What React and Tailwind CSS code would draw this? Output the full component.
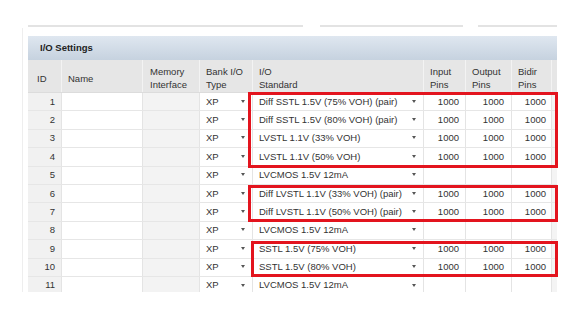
import React from 'react';

// I/O standard per pin row; pins blank for single-ended LVCMOS rows
const rows = [
  { id: 1, std: 'Diff SSTL 1.5V (75% VOH) (pair)', pins: true },
  { id: 2, std: 'Diff SSTL 1.5V (80% VOH) (pair)', pins: true },
  { id: 3, std: 'LVSTL 1.1V (33% VOH)', pins: true },
  { id: 4, std: 'LVSTL 1.1V (50% VOH)', pins: true },
  { id: 5, std: 'LVCMOS 1.5V 12mA', pins: false },
  { id: 6, std: 'Diff LVSTL 1.1V (33% VOH) (pair)', pins: true },
  { id: 7, std: 'Diff LVSTL 1.1V (50% VOH) (pair)', pins: true },
  { id: 8, std: 'LVCMOS 1.5V 12mA', pins: false },
  { id: 9, std: 'SSTL 1.5V (75% VOH)', pins: true },
  { id: 10, std: 'SSTL 1.5V (80% VOH)', pins: true },
  { id: 11, std: 'LVCMOS 1.5V 12mA', pins: false },
];

function Caret() {
  return (
    <span className="mb-[1px] h-0 w-0 border-x-[2.5px] border-t-[3px] border-x-transparent border-t-[#555]" />
  );
}

function HeadCell({ className, children }) {
  return (
    <div className={`flex h-full items-center border-r border-[#f3f3f3] pl-[6px] pt-[4px] leading-[13px] ${className}`}>
      <div>{children}</div>
    </div>
  );
}

function Row({ row }) {
  const cell = 'flex h-full items-center border-r border-[#e4e4e4]';
  return (
    <div className="flex h-[18.4px] border-b border-[#e6e6e6]">
      <div className={`${cell} w-[34px] justify-end bg-[#f1f1f1] pr-[6px]`}>{row.id}</div>
      <div className={`${cell} w-[81px] bg-white`} />
      <div className={`${cell} w-[57px] bg-[#f3f3f3]`} />
      <div className={`${cell} w-[53px] justify-between bg-white pl-[6px] pr-[7px]`}>
        <span>XP</span>
        <Caret />
      </div>
      <div className={`${cell} w-[171px] justify-between bg-white pl-[6px] pr-[7px]`}>
        <span>{row.std}</span>
        <Caret />
      </div>
      <div className={`${cell} w-[42px] justify-end bg-white pr-[6px]`}>{row.pins && '1000'}</div>
      <div className={`${cell} w-[46px] justify-end bg-white pr-[7px]`}>{row.pins && '1000'}</div>
      <div className={`${cell} w-[40px] justify-end bg-white pr-[5px]`}>{row.pins && '1000'}</div>
      <div className="h-full w-[5px] bg-[#f4f4f4]" />
    </div>
  );
}

export default function App() {
  return (
    <div className="h-[316px] w-[586px] overflow-hidden bg-white font-['Liberation_Sans',Arial,sans-serif] text-[9.5px] text-[#333]">
      {/* tab strip underline */}
      <div className="flex h-[27px] pt-[25px]">
        <div className="ml-[28px] h-[2px] w-[275px] bg-[#e3e3e3]" />
        <div className="ml-[17px] h-[2px] w-[143px] bg-[#e3e3e3]" />
        <div className="ml-[15px] h-[2px] w-[79px] bg-[#e3e3e3]" />
      </div>

      <div className="ml-[22px] mt-[1px] h-[264px] border-l border-[#eeeeee] pl-[5px] pt-[8px]">
        <div className="relative w-[529px]">
          {/* panel title */}
          <div className="flex h-[24px] items-center bg-gradient-to-b from-[#dfe7f0] to-[#c6d2df] pl-[12px] font-bold text-[#222]">
            I/O Settings
          </div>

          {/* column headers */}
          <div className="flex h-[33px] border-b border-[#dcdcdc] bg-[#e6e6e6]">
            <HeadCell className="w-[34px] pl-[9px]">ID</HeadCell>
            <HeadCell className="w-[81px]">Name</HeadCell>
            <HeadCell className="w-[57px] pl-[7px]">
              Memory
              <br />
              Interface
            </HeadCell>
            <HeadCell className="w-[53px]">
              Bank I/O
              <br />
              Type
            </HeadCell>
            <HeadCell className="w-[171px]">
              I/O
              <br />
              Standard
            </HeadCell>
            <HeadCell className="w-[42px]">
              Input
              <br />
              Pins
            </HeadCell>
            <HeadCell className="w-[46px]">
              Output
              <br />
              Pins
            </HeadCell>
            <HeadCell className="w-[40px]">
              Bidir
              <br />
              Pins
            </HeadCell>
            <div className="w-[5px]" />
          </div>

          {/* rows */}
          <div className="h-[199px] overflow-hidden">
            {rows.map((row) => (
              <Row key={row.id} row={row} />
            ))}
          </div>

          {/* highlight boxes */}
          <div className="absolute left-[220px] top-[56px] h-[76px] w-[310px] border-[3px] border-[#e3141e]" />
          <div className="absolute left-[220px] top-[149px] h-[37px] w-[310px] border-[3px] border-[#e3141e]" />
          <div className="absolute left-[223px] top-[205px] h-[36px] w-[307px] border-[3px] border-[#e3141e]" />
        </div>
      </div>
    </div>
  );
}
